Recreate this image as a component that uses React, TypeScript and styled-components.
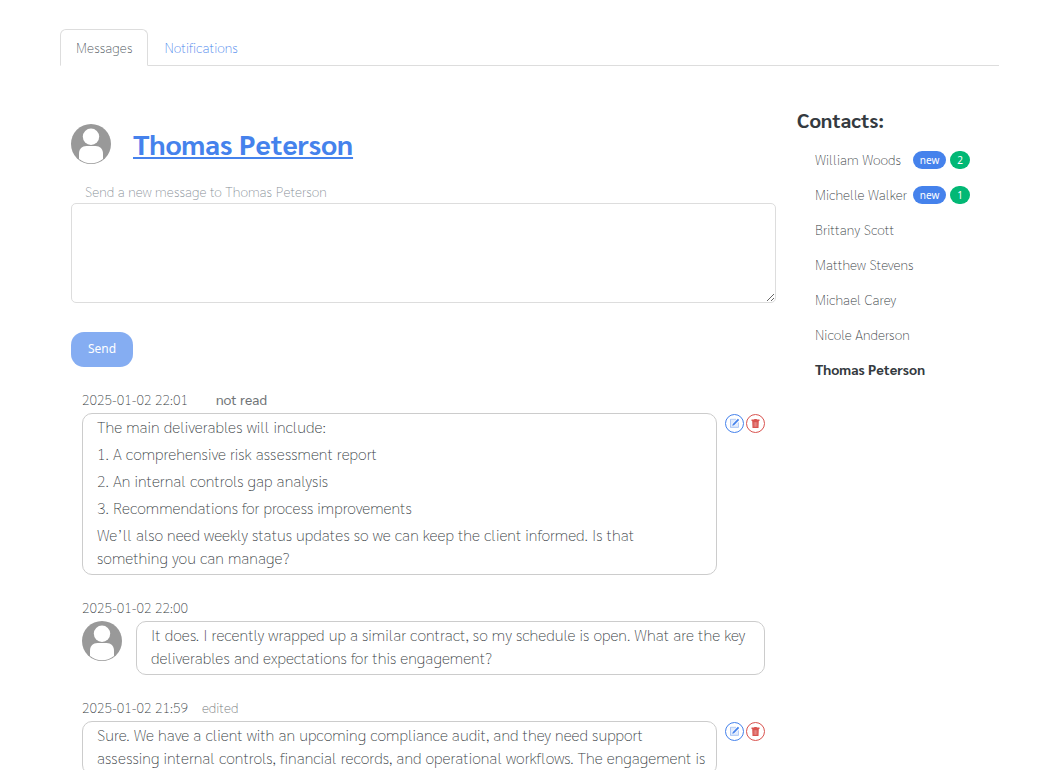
import React, { useState } from "react";
import styled, { createGlobalStyle } from "styled-components";

const GlobalStyle = createGlobalStyle`
  *, *::before, *::after { box-sizing: border-box; }
  body {
    margin: 0;
    background: #fff;
    color: #343a40;
    font-family: Sarabun, "Noto Sans", sans-serif;
    font-size: 14px;
    font-weight: 200;
    line-height: 21px;
  }
  a { color: #4582ec; }
`;

const Page = styled.div`
  padding: 29px 13px 0 60px;
`;

const Tabs = styled.nav`
  display: flex;
  margin-right: 29px;
  border-bottom: 1px solid #ddd;
`;

const Tab = styled.a<{ $active?: boolean }>`
  margin-bottom: -1px;
  padding: 7px 15px;
  border: 1px solid transparent;
  border-color: ${(p) => (p.$active ? "#ddd #ddd #fff" : "transparent")};
  border-radius: 6px 6px 0 0;
  background: ${(p) => (p.$active ? "#fff" : "transparent")};
  text-decoration: none;

  && { color: ${(p) => (p.$active ? "#495057" : "#4582ec")}; }
`;

const Columns = styled.div`
  display: grid;
  grid-template-columns: minmax(0, 3fr) minmax(0, 1fr);
  padding-top: 44px;
`;

const Main = styled.main`
  padding: 14px 10px 24px 11px;
`;

const Sidebar = styled.aside`
  padding: 0 11px;
`;

const PersonHeader = styled.header`
  display: flex;
  align-items: flex-start;
  gap: 22px;
`;

const PersonName = styled.h1`
  margin: 0;
  font-size: 28px;
  font-weight: 700;
  line-height: 38px;
`;

const ComposeLabel = styled.label`
  display: block;
  padding: 17px 14px 1px;
  color: #868e96;
`;

const ComposeBox = styled.textarea`
  display: block;
  width: 100%;
  height: 100px;
  padding: 8px 14px;
  border: 1px solid #ddd;
  border-radius: 5px;
  background: #fff;
  color: inherit;
  font: inherit;
  resize: vertical;
`;

const SendButton = styled.button`
  display: block;
  height: 35px;
  margin-top: 29px;
  padding: 0 17px 2px;
  border: 0;
  border-radius: 13px;
  background: #4582ec;
  color: #fff;
  font-family: "Noto Sans", sans-serif;
  font-size: 12px;
  font-weight: 400;
  line-height: 18px;
  opacity: 0.65;
`;

const Thread = styled.section`
  display: flex;
  flex-direction: column;
  gap: 22px;
  padding: 22px 11px 0;
`;

const MessageMeta = styled.div`
  display: flex;
  padding-bottom: 3px;
  color: #343a40;
`;

const Unread = styled.span`
  margin-left: 28px;
  font-weight: 400;
  opacity: 0.7;
`;

const Edited = styled.span`
  margin-left: 14px;
  opacity: 0.7;
`;

const MessageRow = styled.div`
  display: flex;
  align-items: flex-start;
`;

const Bubble = styled.div`
  flex: 1;
  min-width: 0;
  padding: 1px 8px 1px 14px;
  border: 1px solid #ccc;
  border-radius: 10px;
  font-size: 16px;
  line-height: 23px;
`;

const Paragraph = styled.p`
  margin: 0 0 4px;
`;

const Actions = styled.div`
  display: flex;
  gap: 2px;
  margin-left: 8px;
  padding-top: 1px;
`;

const ActionButton = styled.button<{ $danger?: boolean }>`
  display: grid;
  place-items: center;
  width: 19px;
  height: 19px;
  padding: 0;
  border: 1px solid currentColor;
  border-radius: 50%;
  background: #fff;
  color: ${(p) => (p.$danger ? "#d9534f" : "#4582ec")};
`;

const AvatarFrame = styled.span`
  display: flex;
  flex: none;
  margin-right: 14px;

  ${PersonHeader} & { margin-right: 0; }
`;

const SidebarTitle = styled.h2`
  margin: 0 0 12px;
  font-size: 20px;
  font-weight: 700;
  line-height: 20px;
`;

const ContactList = styled.ul`
  margin: 0;
  padding: 0 0 0 18px;
  list-style: none;
`;

const ContactRow = styled.li`
  display: flex;
  align-items: center;
  height: 35px;
`;

const ContactLink = styled.a<{ $current?: boolean }>`
  font-weight: ${(p) => (p.$current ? 700 : "inherit")};
  text-decoration: none;
  white-space: nowrap;

  && { color: #343a40; }
`;

const Badges = styled.span`
  display: flex;
  gap: 4px;
  margin-left: auto;
  padding-right: 47px;
`;

const Badge = styled.span<{ $count?: boolean }>`
  height: 18px;
  padding: 0 7px;
  border-radius: 9px;
  background: ${(p) => (p.$count ? "#02b875" : "#4582ec")};
  color: #fff;
  font-family: "Noto Sans", sans-serif;
  font-size: 10px;
  font-weight: 400;
  line-height: 19px;
`;

function Avatar() {
  return (
    <AvatarFrame>
      <svg width="40" height="40" viewBox="0 0 40 40" aria-hidden="true">
        <circle cx="20" cy="20" r="20" fill="#999" />
        <circle cx="20" cy="12.800" r="8.200" fill="#fff" />
        <path d="M8 35v-5.500c0-4.500 3-7.500 7.500-7.500h9c4.500 0 7.500 3 7.500 7.500V35a19.200 19.200 0 0 1-24 0z" fill="#fff" />
      </svg>
    </AvatarFrame>
  );
}

function EditIcon() {
  return (
    <svg width="11" height="11" viewBox="0 0 11 11" aria-hidden="true">
      <path d="M1 1.500h6.500L3.500 5.500v2h2l4-4V10H1z" fill="currentColor" opacity="0.15" />
      <path d="M7 1.300H1.500v8h8V4.500" fill="none" stroke="currentColor" strokeWidth="1" opacity="0.350" />
      <path d="M3.200 7.800l.6-1.900L8.900.8l1.300 1.300-5.100 5.100z" fill="currentColor" />
    </svg>
  );
}

function TrashIcon() {
  return (
    <svg width="9" height="9" viewBox="0 0 9 9" aria-hidden="true">
      <path d="M0.500 .6h2.500l.5-.6h2l.5.6h2.500v1.400h-8z" fill="currentColor" />
      <path d="M1.200 2h6.600l-.3 7h-6z" fill="currentColor" />
      <path d="M3.200 3.200v4.600M4.500 3.200v4.600M5.800 3.200v4.600" stroke="#fff" strokeWidth="0.500" opacity="0.600" />
    </svg>
  );
}

interface Message {
  time: string;
  own: boolean;
  unread?: boolean;
  edited?: boolean;
  text: string[];
}

const messages: Message[] = [
  {
    time: "2025-01-02 22:01",
    own: true,
    unread: true,
    text: [
      "The main deliverables will include:",
      "1. A comprehensive risk assessment report",
      "2. An internal controls gap analysis",
      "3. Recommendations for process improvements",
      "We’ll also need weekly status updates so we can keep the client informed. Is that something you can manage?",
    ],
  },
  {
    time: "2025-01-02 22:00",
    own: false,
    text: [
      "It does. I recently wrapped up a similar contract, so my schedule is open. What are the key deliverables and expectations for this engagement?",
    ],
  },
  {
    time: "2025-01-02 21:59",
    own: true,
    edited: true,
    text: [
      "Sure. We have a client with an upcoming compliance audit, and they need support assessing internal controls, financial records, and operational workflows. The engagement is",
    ],
  },
];

const contacts: { name: string; unread?: number }[] = [
  { name: "William Woods", unread: 2 },
  { name: "Michelle Walker", unread: 1 },
  { name: "Brittany Scott" },
  { name: "Matthew Stevens" },
  { name: "Michael Carey" },
  { name: "Nicole Anderson" },
  { name: "Thomas Peterson" },
];

function MessageItem({ message }: { message: Message }) {
  return (
    <article>
      <MessageMeta>
        <time>{message.time}</time>
        {message.unread && <Unread>not read</Unread>}
        {message.edited && <Edited>edited</Edited>}
      </MessageMeta>
      <MessageRow>
        {!message.own && <Avatar />}
        <Bubble>
          {message.text.map((line) => (
            <Paragraph key={line}>{line}</Paragraph>
          ))}
        </Bubble>
        {message.own && (
          <Actions>
            <ActionButton type="button" aria-label="Edit message"><EditIcon /></ActionButton>
            <ActionButton type="button" aria-label="Delete message" $danger><TrashIcon /></ActionButton>
          </Actions>
        )}
      </MessageRow>
    </article>
  );
}

export default function App() {
  const [draft, setDraft] = useState("");
  const current = "Thomas Peterson";

  return (
    <>
      <GlobalStyle />
      <Page>
        <Tabs>
          <Tab href="#messages" $active aria-current="page">Messages</Tab>
          <Tab href="#notifications">Notifications</Tab>
        </Tabs>
        <Columns>
          <Main>
            <PersonHeader>
              <Avatar />
              <PersonName><a href="#profile">{current}</a></PersonName>
            </PersonHeader>
            <ComposeLabel htmlFor="draft">Send a new message to {current}</ComposeLabel>
            <ComposeBox id="draft" value={draft} onChange={(e) => setDraft(e.target.value)} />
            <SendButton type="button">Send</SendButton>
            <Thread>
              {messages.map((message) => <MessageItem key={message.time} message={message} />)}
            </Thread>
          </Main>
          <Sidebar>
            <SidebarTitle>Contacts:</SidebarTitle>
            <ContactList>
              {contacts.map((contact) => (
                <ContactRow key={contact.name}>
                  <ContactLink href="#contact" $current={contact.name === current}>{contact.name}</ContactLink>
                  {contact.unread && (
                    <Badges>
                      <Badge>new</Badge>
                      <Badge $count>{contact.unread}</Badge>
                    </Badges>
                  )}
                </ContactRow>
              ))}
            </ContactList>
          </Sidebar>
        </Columns>
      </Page>
    </>
  );
}
